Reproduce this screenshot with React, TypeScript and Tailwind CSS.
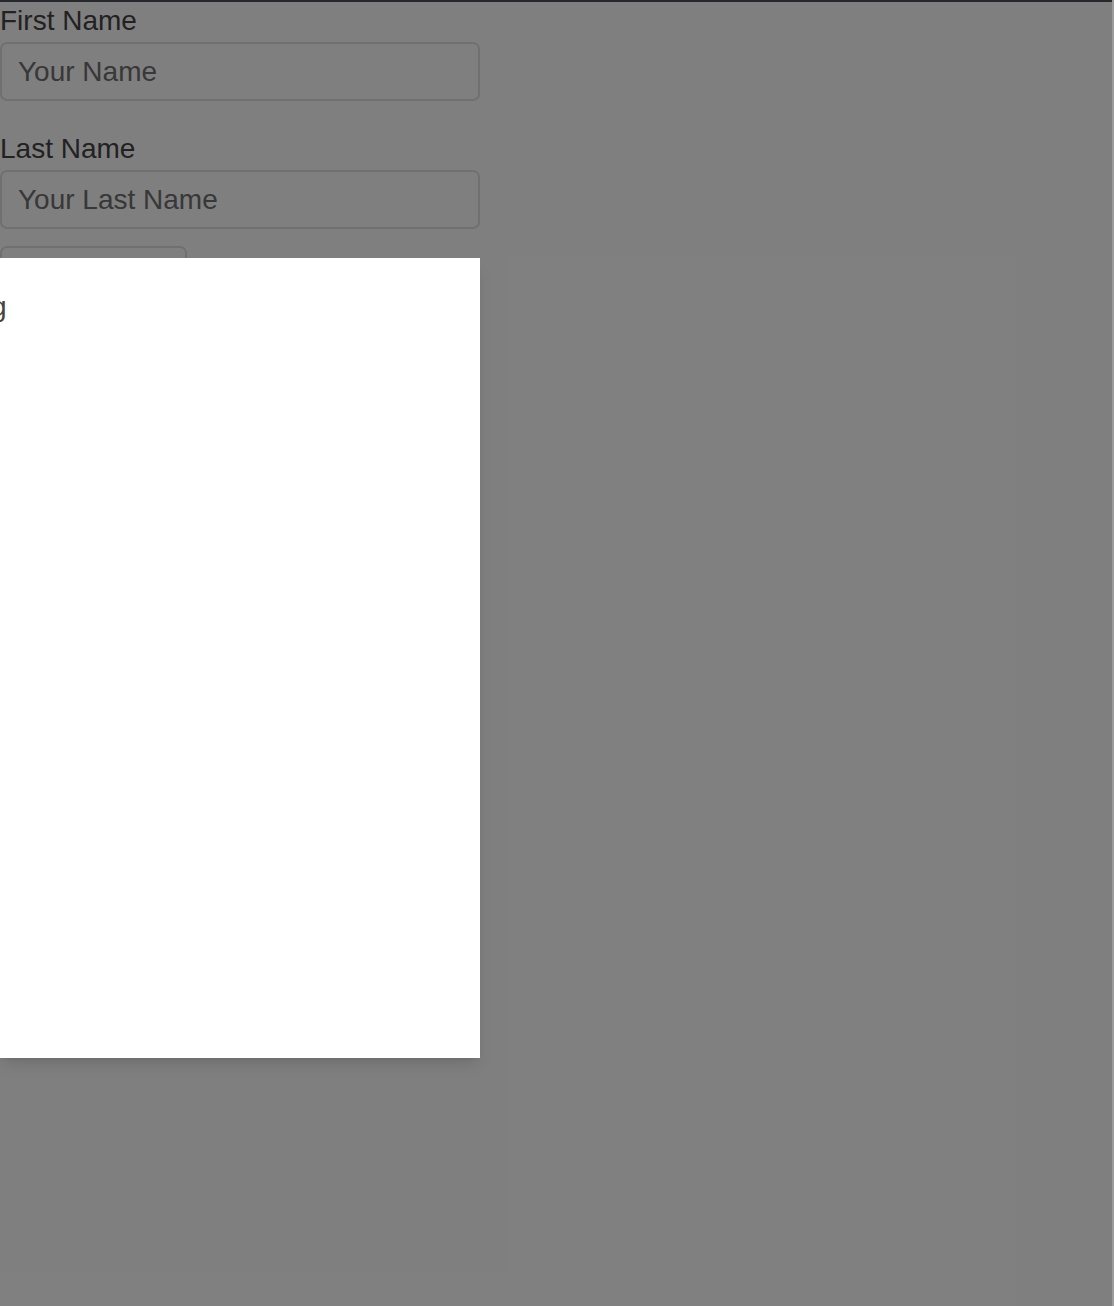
import React from 'react';

const App: React.FC = () => {
  return (
    <div className="relative h-[1306px] w-full overflow-hidden bg-white font-['Liberation_Sans',Arial,sans-serif] text-[#444]">
      {/* Form */}
      <form className="w-[480px] pt-[5px]">
        <label className="block text-[28px] leading-[32px]">First Name</label>
        <input
          type="text"
          placeholder="Your Name"
          className="mt-[5px] block h-[59px] w-[480px] rounded-[7px] border-2 border-[#e0e0e0] bg-white px-[16px] text-[28px] placeholder:text-[#707070] outline-none"
        />
        <label className="mt-[32px] block text-[28px] leading-[32px]">Last Name</label>
        <input
          type="text"
          placeholder="Your Last Name"
          className="mt-[5px] block h-[59px] w-[480px] rounded-[7px] border-2 border-[#e0e0e0] bg-white px-[16px] text-[28px] placeholder:text-[#707070] outline-none"
        />
        <button
          type="button"
          className="mt-[17px] block h-[58px] w-[187px] rounded-[7px] border-2 border-[#e0e0e0] bg-white text-[28px]"
        >
          Submit
        </button>
      </form>

      {/* Overlay */}
      <div className="absolute inset-0 bg-black/50" />

      {/* Modal */}
      <div className="absolute left-0 top-[258px] h-[800px] w-[480px] overflow-hidden bg-white shadow-lg">
        <p className="ml-[-93px] mt-[33px] whitespace-nowrap text-[28px] leading-[32px] text-[#444]">Loading</p>
      </div>

      {/* Top line and right edge */}
      <div className="absolute left-0 right-0 top-0 h-[2px] bg-[#25292d]" />
      <div className="absolute bottom-0 right-0 top-0 w-[2px] bg-[#9b9b9b]" />
    </div>
  );
};

export default App;
